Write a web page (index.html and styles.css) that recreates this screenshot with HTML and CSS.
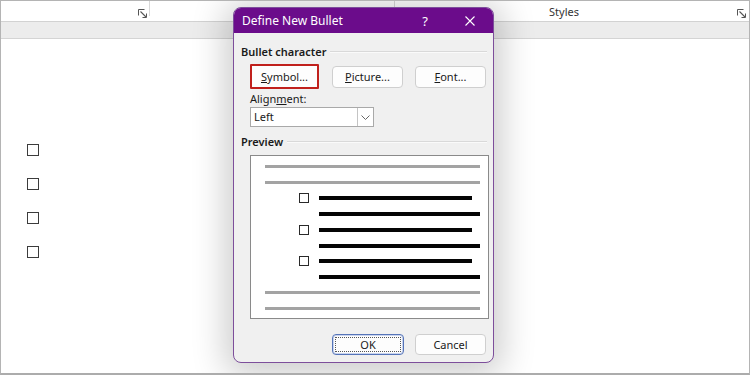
FILE: index.html
```html
<!DOCTYPE html>
<html>
<head>
<meta charset="utf-8">
<title>Define New Bullet</title>
<link rel="stylesheet" href="styles.css">
</head>
<body>
<div class="page">
  <div class="ribbon">
    <div class="grp grp-para">
      <svg class="launcher" viewBox="0 0 9 9" width="9" height="9"><path d="M0.5 6.5V0.5H6.5" fill="none" stroke="#555" stroke-width="1"/><path d="M2.5 2.5L8 8" fill="none" stroke="#555" stroke-width="1.1"/><path d="M8.5 4.5V8.5H4.5" fill="none" stroke="#555" stroke-width="1"/></svg>
    </div>
    <div class="sep"></div>
    <div class="grp grp-mid"></div>
    <div class="sep"></div>
    <div class="grp grp-styles">
      <span class="grp-name">Styles</span>
      <svg class="launcher" viewBox="0 0 9 9" width="9" height="9"><path d="M0.5 6.5V0.5H6.5" fill="none" stroke="#555" stroke-width="1"/><path d="M2.5 2.5L8 8" fill="none" stroke="#555" stroke-width="1.1"/><path d="M8.5 4.5V8.5H4.5" fill="none" stroke="#555" stroke-width="1"/></svg>
    </div>
  </div>
  <div class="band"></div>
  <div class="doc">
    <span class="doc-box"></span>
    <span class="doc-box"></span>
    <span class="doc-box"></span>
    <span class="doc-box"></span>
  </div>

  <div class="dialog">
    <div class="titlebar">
      <span class="title">Define New Bullet</span>
      <span class="help">?</span>
      <svg class="close" viewBox="0 0 10 10" width="10" height="10"><path d="M0.5 0.5L9.5 9.5M9.5 0.5L0.5 9.5" stroke="#fff" stroke-width="1.1" fill="none"/></svg>
    </div>
    <div class="dlg-body">
      <div class="section-head">Bullet character</div>
      <div class="btn-row">
        <button class="btn btn-symbol"><u>S</u>ymbol...</button>
        <button class="btn btn-picture"><u>P</u>icture...</button>
        <button class="btn btn-font"><u>F</u>ont...</button>
      </div>
      <div class="field-label">Align<u>m</u>ent:</div>
      <div class="select">
        <span class="select-value">Left</span>
        <span class="select-arrow"><svg viewBox="0 0 9 5" width="9" height="5"><path d="M0.5 0.5L4.5 4.5L8.5 0.5" fill="none" stroke="#666" stroke-width="1"/></svg></span>
      </div>
      <div class="section-head">Preview</div>
      <div class="preview">
        <div class="pv-row"><span class="pv-gray"></span></div>
        <div class="pv-row"><span class="pv-gray"></span></div>
        <div class="pv-row"><span class="pv-box"></span><span class="pv-line pv-short"></span></div>
        <div class="pv-row"><span class="pv-line pv-long"></span></div>
        <div class="pv-row"><span class="pv-box"></span><span class="pv-line pv-short"></span></div>
        <div class="pv-row"><span class="pv-line pv-long"></span></div>
        <div class="pv-row"><span class="pv-box"></span><span class="pv-line pv-short"></span></div>
        <div class="pv-row"><span class="pv-line pv-long"></span></div>
        <div class="pv-row"><span class="pv-gray"></span></div>
        <div class="pv-row"><span class="pv-gray"></span></div>
      </div>
      <div class="actions">
        <button class="btn btn-ok"><span class="focus-ring">OK</span></button>
        <button class="btn btn-cancel">Cancel</button>
      </div>
    </div>
  </div>
</div>
</body>
</html>
```

FILE: styles.css
```css
* { box-sizing: border-box; }

html, body {
  margin: 0;
  padding: 0;
  background: #fff;
}

body {
  font-family: "Noto Sans", "Open Sans", sans-serif;
  font-size: 11px;
  color: #1a1a1a;
}

.page {
  position: relative;
  width: 750px;
  height: 375px;
  border: 1px solid #b4b4b4;
  border-bottom: 2px solid #acacac;
  background: #fff;
  overflow: hidden;
}

/* ribbon */
.ribbon {
  display: flex;
  height: 21px;
  border-bottom: 1px solid #d2d2d2;
}

.grp {
  display: flex;
  align-items: flex-start;
}

.grp-para {
  width: 148px;
  justify-content: flex-end;
}

.grp-mid {
  width: 244px;
}

.grp-styles {
  flex: 1;
}

.sep {
  width: 1px;
  height: 15px;
  background: #d8d8d8;
}

.launcher {
  display: block;
  margin-top: 8px;
  margin-right: 2px;
}

.grp-name {
  flex: 1;
  text-align: center;
  padding-top: 3px;
  line-height: 15px;
  color: #333;
  padding-right: 4px;
}

.grp-styles .launcher {
  margin-right: 3px;
}

.band {
  height: 17px;
  background: #ececec;
  border-bottom: 1px solid #d4d4d4;
}

/* document */
.doc {
  display: flex;
  flex-direction: column;
  gap: 22px;
  padding-top: 105px;
  padding-left: 26px;
}

.doc-box {
  display: block;
  width: 12px;
  height: 12px;
  border: 1.5px solid #3c3c3c;
}

/* dialog */
.dialog {
  position: absolute;
  left: 232px;
  top: 6px;
  width: 261px;
  height: 356px;
  background: #f0f0f0;
  border: 1px solid #7d4e9b;
  border-radius: 8px;
  box-shadow: 0 4px 34px 8px rgba(0, 0, 0, 0.2);
  display: flex;
  flex-direction: column;
  overflow: hidden;
}

.titlebar {
  display: flex;
  align-items: center;
  height: 25px;
  background: #6b0c8b;
  color: #fff;
  flex-shrink: 0;
}

.title {
  flex: 1;
  padding-left: 8px;
  font-size: 12px;
}

.help {
  font-size: 13px;
  margin-right: 37px;
}

.close {
  display: block;
  margin-right: 18px;
}

.dlg-body {
  display: flex;
  flex-direction: column;
  padding: 0 6px 0 7px;
}

.section-head {
  display: flex;
  align-items: center;
  height: 16px;
  line-height: 16px;
  font-weight: 600;
  color: #1a1a1a;
  margin-top: 11px;
}

.section-head::after {
  content: "";
  flex: 1;
  height: 1px;
  margin-left: 4px;
  background: #d9d9d9;
  border-bottom: 1px solid #fafafa;
  box-sizing: content-box;
}

.btn {
  font: inherit;
  color: #1a1a1a;
  background: #fdfdfd;
  border: 1px solid #cfcfcf;
  border-radius: 4px;
  height: 22px;
  padding: 0;
  display: flex;
  align-items: center;
  justify-content: center;
}

.btn-row {
  display: flex;
  align-items: center;
  height: 25px;
  margin-top: 4px;
  padding-left: 9px;
}

.btn-symbol {
  width: 69px;
  height: 25px;
  border: 2px solid #c0201c;
  border-radius: 1px;
}

.btn-picture {
  width: 71px;
  margin-left: 13px;
}

.btn-font {
  width: 71px;
  margin-left: 12px;
}

.field-label {
  margin-top: 2px;
  height: 16px;
  line-height: 16px;
  padding-left: 9px;
}

.select {
  display: flex;
  width: 124px;
  height: 20px;
  margin-left: 9px;
  background: #fff;
  border: 1px solid #a9a9a9;
}

.select-value {
  flex: 1;
  padding-left: 3px;
  line-height: 18px;
}

.select-arrow {
  width: 16px;
  border-left: 1px solid #c4c4c4;
  display: flex;
  align-items: center;
  justify-content: center;
}

.select-arrow svg {
  display: block;
}

.select + .section-head {
  margin-top: 7px;
}

.preview {
  margin-top: 5px;
  margin-left: 9px;
  width: 239px;
  height: 164px;
  background: #fff;
  border: 1px solid #8a8a8a;
  padding-top: 3px;
  display: flex;
  flex-direction: column;
}

.pv-row {
  height: 15.75px;
  display: flex;
  align-items: center;
}

.pv-gray {
  display: block;
  margin-left: 14px;
  width: 215px;
  height: 3px;
  background: #a3a3a3;
}

.pv-box {
  display: block;
  margin-left: 48px;
  width: 10px;
  height: 10px;
  border: 1.5px solid #2a2a2a;
}

.pv-line {
  display: block;
  height: 4px;
  background: #050505;
}

.pv-short {
  margin-left: 10px;
  width: 153px;
}

.pv-long {
  margin-left: 68px;
  width: 161px;
}

.actions {
  display: flex;
  margin-top: 15px;
  padding-left: 91px;
}

.btn-ok {
  width: 72px;
  height: 21px;
  border: 1px solid #5574b8;
  padding: 2px;
  box-shadow: inset 0 0 0 1px #c9d4ee;
}

.focus-ring {
  display: flex;
  align-items: center;
  justify-content: center;
  width: 100%;
  height: 100%;
  border: 1px dotted #555;
}

.btn-cancel {
  width: 71px;
  height: 21px;
  margin-left: 11px;
}
```
